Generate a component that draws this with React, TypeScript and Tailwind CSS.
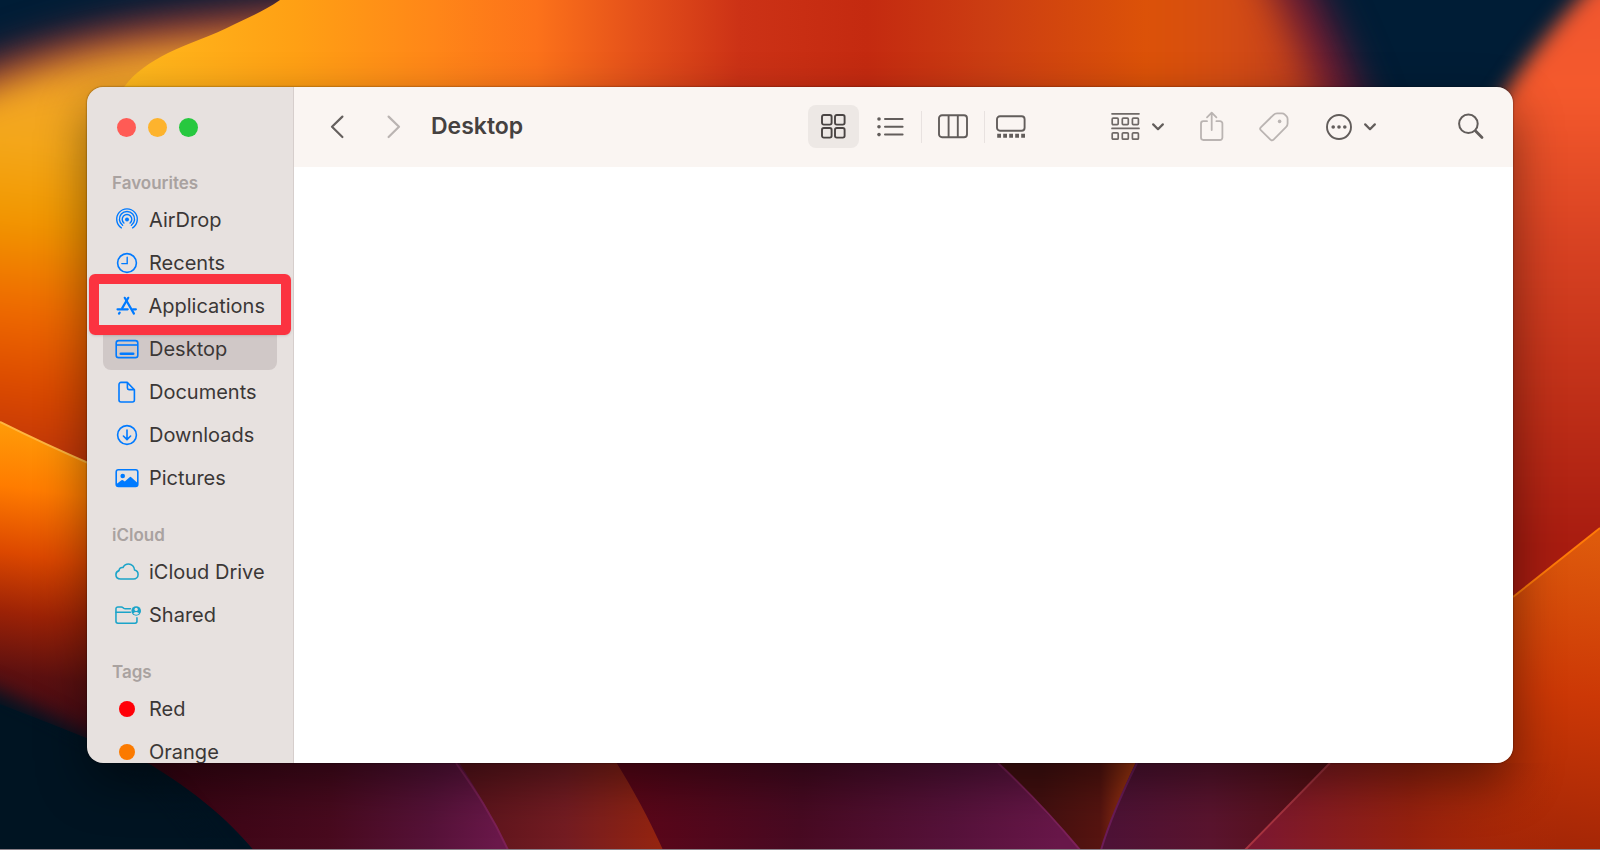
import type { ReactNode } from "react";
import clsx from "clsx";

type SidebarItem = {
  label: string;
  icon: ReactNode;
  active?: boolean;
  highlighted?: boolean;
};

type SidebarSection = {
  title: string;
  items: SidebarItem[];
};

const Wallpaper = () => (
  <svg
    className="absolute inset-0 h-full w-full"
    viewBox="0 0 1600 850"
    preserveAspectRatio="none"
    aria-hidden="true"
  >
    <defs>
      <filter id="soft" x="-20%" y="-20%" width="140%" height="140%" colorInterpolationFilters="sRGB">
        <feGaussianBlur stdDeviation="18" />
      </filter>
      <filter id="edge" x="-20%" y="-20%" width="140%" height="140%" colorInterpolationFilters="sRGB">
        <feGaussianBlur stdDeviation="10" />
      </filter>
      <linearGradient id="leftPetal" gradientUnits="userSpaceOnUse" x1="0" y1="40" x2="-50" y2="470">
        <stop offset="0" stopColor="#f0a02c" />
        <stop offset="0.22" stopColor="#f4a81c" />
        <stop offset="0.4" stopColor="#f29800" />
        <stop offset="0.62" stopColor="#ee6800" />
        <stop offset="0.8" stopColor="#da4800" />
        <stop offset="1" stopColor="#b8300c" />
      </linearGradient>
      <linearGradient id="centrePetal" gradientUnits="userSpaceOnUse" x1="130" y1="30" x2="1400" y2="30">
        <stop offset="0" stopColor="#ffb81c" />
        <stop offset="0.13" stopColor="#ffa014" />
        <stop offset="0.24" stopColor="#ff8618" />
        <stop offset="0.32" stopColor="#fc721a" />
        <stop offset="0.4" stopColor="#e4501a" />
        <stop offset="0.48" stopColor="#cc3216" />
        <stop offset="0.58" stopColor="#c42a10" />
        <stop offset="0.68" stopColor="#cc3e12" />
        <stop offset="0.8" stopColor="#dc5208" />
        <stop offset="0.87" stopColor="#d44c14" />
        <stop offset="1" stopColor="#a02828" />
      </linearGradient>
      <linearGradient id="rightPetal" gradientUnits="userSpaceOnUse" x1="0" y1="0" x2="0" y2="600">
        <stop offset="0" stopColor="#f0562f" />
        <stop offset="0.15" stopColor="#f4592c" />
        <stop offset="0.4" stopColor="#d84222" />
        <stop offset="0.65" stopColor="#c03018" />
        <stop offset="0.9" stopColor="#a81c10" />
      </linearGradient>
      <linearGradient id="rightLower" gradientUnits="userSpaceOnUse" x1="1600" y1="540" x2="1560" y2="850">
        <stop offset="0" stopColor="#de5a0c" />
        <stop offset="0.5" stopColor="#cc3806" />
        <stop offset="1" stopColor="#a42606" />
      </linearGradient>
      <linearGradient id="rightFloor" gradientUnits="userSpaceOnUse" x1="1260" y1="0" x2="1560" y2="0">
        <stop offset="0" stopColor="#7c1830" />
        <stop offset="0.5" stopColor="#942010" stopOpacity="0.9" />
        <stop offset="1" stopColor="#b02a06" stopOpacity="0" />
      </linearGradient>
      <linearGradient id="leftLower" gradientUnits="userSpaceOnUse" x1="0" y1="425" x2="-40" y2="720">
        <stop offset="0" stopColor="#ff9a08" />
        <stop offset="0.2" stopColor="#ff7c00" />
        <stop offset="0.42" stopColor="#dc4800" />
        <stop offset="0.62" stopColor="#9c2206" />
        <stop offset="0.82" stopColor="#5c1010" />
        <stop offset="1" stopColor="#400a16" />
      </linearGradient>
      <linearGradient id="wine" gradientUnits="userSpaceOnUse" x1="160" y1="790" x2="500" y2="810">
        <stop offset="0" stopColor="#380412" />
        <stop offset="0.5" stopColor="#480a1e" />
        <stop offset="0.8" stopColor="#561238" />
        <stop offset="1" stopColor="#6a184a" />
      </linearGradient>
      <linearGradient id="rust" gradientUnits="userSpaceOnUse" x1="470" y1="0" x2="660" y2="0">
        <stop offset="0" stopColor="#5c141c" />
        <stop offset="0.5" stopColor="#741c22" />
        <stop offset="1" stopColor="#942410" />
      </linearGradient>
      <linearGradient id="plum" gradientUnits="userSpaceOnUse" x1="630" y1="780" x2="1060" y2="820">
        <stop offset="0" stopColor="#5c0618" />
        <stop offset="0.4" stopColor="#480a22" />
        <stop offset="0.75" stopColor="#56123a" />
        <stop offset="1" stopColor="#681749" />
      </linearGradient>
      <linearGradient id="violet" gradientUnits="userSpaceOnUse" x1="1110" y1="0" x2="1310" y2="0">
        <stop offset="0" stopColor="#4e1236" />
        <stop offset="0.5" stopColor="#5a142e" />
        <stop offset="1" stopColor="#581016" />
      </linearGradient>
      <linearGradient id="ember" gradientUnits="userSpaceOnUse" x1="1040" y1="0" x2="1140" y2="0">
        <stop offset="0" stopColor="#441010" />
        <stop offset="0.6" stopColor="#561410" />
        <stop offset="1" stopColor="#b84010" />
      </linearGradient>
    </defs>

    <rect width="1600" height="850" fill="#001d36" />
    <rect y="600" width="500" height="250" fill="#001422" />

    <path
      d="M-80 90 C0 50 90 22 200 10 L400 -10 L400 500 L-80 500 Z"
      fill="#7c2c34"
      filter="url(#soft)"
    />
    <path
      d="M-80 120 C0 76 80 48 190 40 L400 20 L400 500 L-80 500 Z"
      fill="url(#leftPetal)"
      filter="url(#soft)"
    />

    <path d="M1100 -60 L1290 -60 C1330 10 1355 70 1380 140 L1380 300 L1100 300 Z" fill="#641a34" filter="url(#soft)" />
    <path d="M700 -80 L1225 -80 C1275 -20 1310 60 1335 140 L1335 300 L700 300 Z" fill="url(#centrePetal)" filter="url(#soft)" />
    <path
      d="M280 0 C264 11 250 17 235 24 C210 37 190 42 168 53 C150 62 134 73 124 87 L124 300 L1150 300 L1150 0 Z"
      fill="url(#centrePetal)"
    />

    <path d="M1700 -70 L1640 -60 C1570 0 1520 65 1475 140 L1475 700 L1700 700 Z" fill="url(#rightPetal)" filter="url(#edge)" />

    <path d="M0 422 C30 437 60 451 95 466 L300 560 L300 820 C200 790 90 735 -40 690 L-40 422 Z" fill="url(#leftLower)" />
    <path d="M0 422 C30 437 60 451 95 466" stroke="#ffb640" strokeWidth="2" fill="none" />

    <path d="M100 735 C190 785 225 815 262 860 L530 860 L480 740 L135 740 Z" fill="url(#wine)" />
    <path d="M-60 665 C20 700 110 740 172 795 L255 900 L-60 900 Z" fill="#001422" filter="url(#edge)" />
    <path d="M445 740 C470 780 490 810 508 850 L680 850 L605 740 Z" fill="url(#rust)" />
    <path d="M456 763 C475 790 492 815 508 850" stroke="#7c2055" strokeWidth="2" fill="none" />
    <path d="M602 740 C625 775 645 810 663 850 L1080 850 L980 740 Z" fill="url(#plum)" />
    <path d="M975 740 C1010 775 1050 815 1080 850 L1101 850 L1146 740 Z" fill="url(#ember)" />
    <path d="M998 763 C1030 793 1055 820 1080 850" stroke="#7c2058" strokeWidth="2" fill="none" />
    <path d="M1146 740 C1130 775 1113 810 1101 850 L1250 850 L1360 740 Z" fill="url(#violet)" />
    <path d="M1137 763 C1122 793 1110 820 1101 850" stroke="#6c1c58" strokeWidth="2" fill="none" />

    <path d="M1600 528 L1513 597 L1330 763 L1245 850 L1600 850 Z" fill="url(#rightLower)" />
    <path d="M1330 763 L1245 850 L1600 850 L1600 763 Z" fill="url(#rightFloor)" />
    <path d="M1600 528 L1513 597" stroke="#ff7a08" strokeWidth="2" />
    <path d="M1330 763 L1245 850" stroke="#a83440" strokeWidth="2" />
    <rect y="849" width="1600" height="1" fill="#8a8088" />
  </svg>
);

const blue = "#007aff";
const teal = "#1ba4c9";

const AirDropIcon = () => (
  <svg width="24" height="24" viewBox="0 0 24 24" fill="none" stroke={blue} strokeWidth="1.4" strokeLinecap="round">
    <path d="M6.4 19.8 A10.3 10.3 0 1 1 17.6 19.8" />
    <path d="M7.6 17.3 A7.6 7.6 0 1 1 16.4 17.3" />
    <path d="M8.9 15 A4.8 4.8 0 1 1 15.1 15" />
    <circle cx="12" cy="11.4" r="2" fill={blue} stroke="none" />
  </svg>
);

const RecentsIcon = () => (
  <svg width="24" height="24" viewBox="0 0 24 24" fill="none" stroke={blue} strokeWidth="1.6">
    <circle cx="12" cy="12" r="9.4" />
    <path d="M12.2 6.2 V12.6 H6.8" strokeWidth="1.4" strokeLinecap="round" />
  </svg>
);

const ApplicationsIcon = () => (
  <svg width="24" height="24" viewBox="0 0 24 24" fill="none" stroke={blue} strokeWidth="2.3" strokeLinecap="round">
    <path d="M10 3.6 L19.4 19.8" />
    <path d="M13.6 3.6 L7.4 14.2" />
    <path d="M4.8 18.8 L4.1 19.8" />
    <path d="M2.6 15.4 H13" />
    <path d="M18.4 15.4 H21.4" />
  </svg>
);

const DesktopIcon = () => (
  <svg width="24" height="24" viewBox="0 0 24 24" fill="none" stroke={blue} strokeWidth="1.6">
    <rect x="1.2" y="3.6" width="21.6" height="17" rx="2.4" />
    <path d="M1.2 8 H22.8" />
    <path d="M5.8 16.8 H18.2" strokeWidth="2.6" strokeLinecap="round" />
  </svg>
);

const DocumentsIcon = () => (
  <svg width="24" height="24" viewBox="0 0 24 24" fill="none" stroke={blue} strokeWidth="1.6" strokeLinejoin="round">
    <path d="M6 2.4 H12.2 L19.4 9.8 V20 A2 2 0 0 1 17.4 22 H6 A2 2 0 0 1 4 20 V4.4 A2 2 0 0 1 6 2.4 Z" />
    <path d="M12.4 2.6 V8 A1.6 1.6 0 0 0 14 9.6 H19.2" />
  </svg>
);

const DownloadsIcon = () => (
  <svg width="24" height="24" viewBox="0 0 24 24" fill="none" stroke={blue} strokeWidth="1.6" strokeLinecap="round" strokeLinejoin="round">
    <circle cx="12" cy="12" r="9.4" />
    <path d="M12 7 V16.4 M8.4 13 L12 16.6 L15.6 13" />
  </svg>
);

const PicturesIcon = () => (
  <svg width="24" height="24" viewBox="0 0 24 24" fill="none">
    <rect x="1.2" y="3.8" width="21.6" height="16.6" rx="2.2" stroke={blue} strokeWidth="1.6" />
    <circle cx="7.7" cy="10" r="2.3" fill={blue} />
    <path d="M1.6 18 L6.4 14.2 Q7.2 13.6 8 14.2 L9.8 15.6 L14.6 11.2 Q15.4 10.5 16.2 11.2 L22.6 17 V18.6 Q22.6 20.4 20.8 20.4 H3.4 Q1.6 20.4 1.6 18.6 Z" fill={blue} />
  </svg>
);

const CloudIcon = () => (
  <svg width="24" height="24" viewBox="0 0 26 26" fill="none" stroke={teal} strokeWidth="1.7" strokeLinejoin="round">
    <path d="M6.2 20.6 C3 20.6 1 18.8 1 16 C1 13.6 2.4 12 4.4 11.5 C4.3 9.2 6.4 7.6 8.6 8.2 C9.8 5.8 12 4.4 14.6 4.4 C18.3 4.4 21 7.3 21.2 10.8 C23.6 11.4 25 13.3 25 15.6 C25 18.5 22.9 20.6 20 20.6 Z" />
  </svg>
);

const SharedIcon = () => (
  <svg className="-mr-0.5" width="26" height="24" viewBox="0 0 27 24" fill="none" stroke={teal} strokeWidth="1.6" strokeLinecap="round">
    <path d="M22.8 15 V18.6 A2 2 0 0 1 20.8 20.6 H3 A2 2 0 0 1 1 18.6 V5.6 A2 2 0 0 1 3 3.6 H6.6 Q7.6 3.6 8.4 4.4 L9 5 Q9.6 5.6 10.6 5.6 H16" />
    <path d="M1 9.2 H16" />
    <circle cx="22" cy="7.8" r="5" fill={teal} stroke="none" />
    <circle cx="22" cy="6.2" r="1.7" fill="#e7e1df" stroke="none" />
    <path d="M19 10.7 Q19.4 8.8 22 8.8 Q24.6 8.8 25 10.7 Q22 12.6 19 10.7 Z" fill="#e7e1df" stroke="none" />
  </svg>
);

const TagDot = ({ className }: { className: string }) => (
  <span className="flex w-6 justify-center">
    <span className={clsx("size-4 rounded-full", className)} />
  </span>
);

const sections: SidebarSection[] = [
  {
    title: "Favourites",
    items: [
      { label: "AirDrop", icon: <AirDropIcon /> },
      { label: "Recents", icon: <RecentsIcon /> },
      { label: "Applications", icon: <ApplicationsIcon />, highlighted: true },
      { label: "Desktop", icon: <DesktopIcon />, active: true },
      { label: "Documents", icon: <DocumentsIcon /> },
      { label: "Downloads", icon: <DownloadsIcon /> },
      { label: "Pictures", icon: <PicturesIcon /> },
    ],
  },
  {
    title: "iCloud",
    items: [
      { label: "iCloud Drive", icon: <CloudIcon /> },
      { label: "Shared", icon: <SharedIcon /> },
    ],
  },
  {
    title: "Tags",
    items: [
      { label: "Red", icon: <TagDot className="bg-[#ff0008]" /> },
      { label: "Orange", icon: <TagDot className="bg-[#fb7a00]" /> },
    ],
  },
];

const Sidebar = () => (
  <aside className="w-[207px] shrink-0 border-r border-[#d6cecc] bg-[#e7e1df] px-4">
    <div className="mb-[3px] flex h-20 items-center gap-3 pl-3.5">
      <button aria-label="Close" className="size-[19px] rounded-full bg-[#ff5b55]" />
      <button aria-label="Minimise" className="size-[19px] rounded-full bg-[#fdb32d]" />
      <button aria-label="Zoom" className="size-[19px] rounded-full bg-[#27c83f]" />
    </div>
    <nav className="flex flex-col gap-[23px]">
      {sections.map((section) => (
        <section key={section.title}>
          <h2 className="h-7 pl-[9px] text-[17px] leading-[26px] font-semibold text-[#a9a2a0]">{section.title}</h2>
          <ul>
            {section.items.map((item) => (
              <li key={item.label} className={clsx(item.highlighted && "relative z-10")}>
                <a
                  href="#"
                  className={clsx(
                    "flex h-[43px] items-center gap-2.5 rounded-lg px-3 text-[20px] whitespace-nowrap text-[#3b3736]",
                    item.active && "bg-[#d0c8c7]"
                  )}
                >
                  {item.icon}
                  {item.label}
                </a>
                {item.highlighted && (
                  <span className="pointer-events-none absolute -top-2.5 -right-3.5 -bottom-2 -left-3.5 rounded-md border-[10px] border-[#fb3340] shadow-sm" />
                )}
              </li>
            ))}
          </ul>
        </section>
      ))}
    </nav>
  </aside>
);

const Divider = ({ className }: { className?: string }) => (
  <span className={clsx("h-8 w-px bg-[#e8e2e0]", className)} />
);

const DownChevron = () => (
  <svg width="12" height="8" viewBox="0 0 12 8" fill="none" stroke="#625d5b" strokeWidth="2.2" strokeLinecap="round" strokeLinejoin="round">
    <path d="M1.2 1.4 L6 6.2 L10.8 1.4" />
  </svg>
);

const viewButton = "flex h-[43px] w-[51px] items-center justify-center rounded-lg";

const Toolbar = () => (
  <header className="flex h-20 items-center bg-[#faf5f2] pr-[29px] pb-px pl-9">
    <div className="flex flex-1 items-center">
      <button aria-label="Back">
        <svg width="14" height="24" viewBox="0 0 14 24" fill="none" stroke="#65605e" strokeWidth="2.2" strokeLinecap="round" strokeLinejoin="round">
          <path d="M12.4 1.6 L2 11.8 L12.4 22" />
        </svg>
      </button>
      <button aria-label="Forward" className="ml-[43px]" disabled>
        <svg width="14" height="24" viewBox="0 0 14 24" fill="none" stroke="#bab4b2" strokeWidth="2.2" strokeLinecap="round" strokeLinejoin="round">
          <path d="M1.6 1.6 L12 11.8 L1.6 22" />
        </svg>
      </button>
      <h1 className="ml-[30px] text-[23px] font-semibold text-[#454140]">Desktop</h1>
    </div>

    <div className="flex items-center gap-1.5" role="group" aria-label="View">
      <button aria-label="Icons" className={clsx(viewButton, "bg-[#ede8e5]")}>
        <svg width="25" height="25" viewBox="0 0 25 25" fill="none" stroke="#494443" strokeWidth="1.9">
          <rect x="1" y="1" width="9.6" height="9.6" rx="1.8" />
          <rect x="14" y="1" width="9.6" height="9.6" rx="1.8" />
          <rect x="1" y="14" width="9.6" height="9.6" rx="1.8" />
          <rect x="14" y="14" width="9.6" height="9.6" rx="1.8" />
        </svg>
      </button>
      <button aria-label="List" className={viewButton}>
        <svg width="27" height="22" viewBox="0 0 27 22" fill="#625d5b" stroke="#625d5b" strokeWidth="2" strokeLinecap="round">
          <path d="M8 3 H25.6 M8 10.8 H25.6 M8 18.6 H25.6" />
          <circle cx="2" cy="3" r="1.8" stroke="none" />
          <circle cx="2" cy="10.8" r="1.8" stroke="none" />
          <circle cx="2" cy="18.6" r="1.8" stroke="none" />
        </svg>
      </button>
      <Divider className="-mx-px" />
      <button aria-label="Columns" className={viewButton}>
        <svg width="30" height="25" viewBox="0 0 30 25" fill="none" stroke="#625d5b" strokeWidth="1.9">
          <rect x="1" y="1.2" width="28" height="22" rx="3" />
          <path d="M10.6 1.2 V23.2 M19.8 1.2 V23.2" />
        </svg>
      </button>
      <Divider />
      <button aria-label="Gallery" className={clsx(viewButton, "-ml-1.5")}>
        <svg width="30" height="24" viewBox="0 0 30 24" fill="none" stroke="#625d5b" strokeWidth="1.9">
          <rect x="1" y="1.2" width="27.6" height="14.6" rx="3" />
          <path d="M1.2 20.8 H29" strokeWidth="4" strokeDasharray="3.8 2.2" />
        </svg>
      </button>
    </div>

    <div className="ml-[75px] flex items-center gap-[35px]">
      <button aria-label="Group" className="flex items-center gap-3">
        <svg width="29" height="30" viewBox="0 0 29 30" fill="none" stroke="#6f6967" strokeWidth="1.7">
          <path d="M1 1.8 H28 M1 16.4 H28" strokeLinecap="round" />
          <rect x="1.2" y="6.2" width="6" height="6.4" rx="1" />
          <rect x="11.3" y="6.2" width="6" height="6.4" rx="1" />
          <rect x="21.4" y="6.2" width="6" height="6.4" rx="1" />
          <rect x="1.2" y="20.8" width="6" height="6.4" rx="1" />
          <rect x="11.3" y="20.8" width="6" height="6.4" rx="1" />
          <rect x="21.4" y="20.8" width="6" height="6.4" rx="1" />
        </svg>
        <DownChevron />
      </button>
      <button aria-label="Share" disabled>
        <svg width="25" height="32" viewBox="0 0 25 32" fill="none" stroke="#bab4b2" strokeWidth="1.8" strokeLinecap="round" strokeLinejoin="round">
          <path d="M8 10.2 H4.4 A2.4 2.4 0 0 0 2 12.6 V26.6 A2.4 2.4 0 0 0 4.4 29 H21 A2.4 2.4 0 0 0 23.4 26.6 V12.6 A2.4 2.4 0 0 0 21 10.2 H17.4" />
          <path d="M12.7 19 V1.8 M8 6.4 L12.7 1.7 L17.4 6.4" />
        </svg>
      </button>
      <button aria-label="Edit tags" disabled>
        <svg width="30" height="30" viewBox="0 0 30 30" fill="none" stroke="#bab4b2" strokeWidth="1.8" strokeLinejoin="round">
          <path d="M1.8 15.4 L14.6 2.8 Q16 1.4 18 1.4 H23 Q24.6 1.4 25.6 2.4 L27.4 4.2 Q28.6 5.4 28.6 7 V11.4 Q28.6 13.4 27.2 14.8 L14.6 27.6 Q13 29.2 11.4 27.6 L1.8 18.2 Q0.4 16.8 1.8 15.4 Z" />
          <circle cx="20.6" cy="9.4" r="1.8" fill="#bab4b2" stroke="none" />
        </svg>
      </button>
      <button aria-label="More" className="ml-0.5 flex items-center gap-3">
        <svg width="26" height="26" viewBox="0 0 26 26" fill="none" stroke="#625d5b" strokeWidth="1.9">
          <circle cx="13" cy="13" r="12" />
          <circle cx="7.2" cy="13" r="1.8" fill="#625d5b" stroke="none" />
          <circle cx="13" cy="13" r="1.8" fill="#625d5b" stroke="none" />
          <circle cx="18.8" cy="13" r="1.8" fill="#625d5b" stroke="none" />
        </svg>
        <DownChevron />
      </button>
    </div>

    <button aria-label="Search" className="ml-[82px]">
      <svg width="26" height="27" viewBox="0 0 26 27" fill="none" stroke="#625d5b" strokeWidth="2" strokeLinecap="round">
        <circle cx="10.4" cy="10.8" r="9.3" />
        <path d="M17.6 18 L24 24.4" strokeWidth="2.8" />
      </svg>
    </button>
  </header>
);

const App = () => {
  return (
    <div className="relative flex h-screen overflow-hidden bg-[#001d36] p-[87px] font-['Inter',sans-serif]">
      <Wallpaper />
      <div className="relative flex flex-1 rounded-2xl shadow-[0_20px_50px_rgba(0,0,0,0.45),0_0_2px_rgba(0,0,0,0.6)]">
        <div className="flex flex-1 overflow-hidden rounded-2xl">
          <Sidebar />
          <div className="flex min-w-0 flex-1 flex-col">
            <Toolbar />
            <main className="flex-1 bg-white" />
          </div>
        </div>
      </div>
    </div>
  );
};

export default App;
